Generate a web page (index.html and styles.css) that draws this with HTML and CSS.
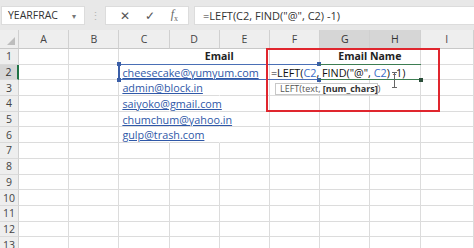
FILE: index.html
```html
<!DOCTYPE html>
<html lang="en">
<head>
  <meta charset="UTF-8">
  <title>Email Name</title>
  <link rel="stylesheet" href="styles.css">
</head>
<body>
  <div class="toolbar">
    <div class="name-box">
      <span>YEARFRAC</span>
      <span class="caret">▾</span>
    </div>
    <div class="grip">⋮</div>
    <div class="fx-box">
      <span class="cancel">✕</span>
      <span class="enter">✓</span>
      <span class="fx"><i>f</i><sub>x</sub></span>
    </div>
    <div class="formula-input">=LEFT(C2, FIND("@", C2) -1)</div>
  </div>

  <div class="sheet" id="sheet">
    <div class="ref-box">
      <span class="handle tl"></span><span class="handle bl"></span>
      <span class="handle tr"></span><span class="handle br"></span>
    </div>
    <div class="edit-box"><span class="handle br"></span></div>
    <div class="red-box"></div>
    <div class="tooltip">LEFT(text, <b>[num_chars]</b>)</div>
    <div class="ibeam"></div>
  </div>

  <script>
    const sheet = document.getElementById("sheet");
    const cols = ["A", "B", "C", "D", "E", "F", "G", "H", "I"];
    const emails = ["cheesecake@yumyum.com", "admin@block.in", "saiyoko@gmail.com", "chumchum@yahoo.in", "gulp@trash.com"];

    function cell(cls, html, span) {
      const div = document.createElement("div");
      div.className = cls;
      if (html) div.innerHTML = html;
      if (span) div.style.gridColumn = "span " + span;
      sheet.appendChild(div);
      return div;
    }

    cell("corner");
    cols.forEach((c) => cell(c === "G" || c === "H" ? "col-head sel" : "col-head", c));

    for (let r = 1; r <= 13; r++) {
      cell(r === 2 ? "row-head sel" : "row-head", r);
      if (r === 1) {
        cell("cell");
        cell("cell");
        cell("cell no-r");
        cell("cell head-text", "Email", 2);
        cell("cell");
        cell("cell head-text", "Email Name", 2);
        cell("cell");
        continue;
      }
      cols.forEach((c) => {
        let cls = "cell";
        let html = "";
        if (r <= 6 && (c === "C" || c === "D")) cls += " no-r";
        if (r === 2 && (c === "F" || c === "G")) cls += " no-r";
        if (r <= 6 && c === "C") html = '<span class="link">' + emails[r - 2] + "</span>";
        if (r === 2 && c === "F") html = '<span class="formula">=LEFT(<span class="ref">C2</span>, FIND("@", <span class="ref">C2</span>) -1)</span>';
        cell(cls, html);
      });
    }
  </script>
</body>
</html>
```

FILE: styles.css
```css
body {
  margin: 0;
  background-color: #fff;
  font-family: "Open Sans", "Noto Sans", sans-serif;
  color: #222;
  overflow: hidden;
}

/* formula bar */
.toolbar {
  height: 30px;
  background-color: #e8e8e8;
  display: flex;
  align-items: center;
  box-sizing: border-box;
  padding: 0 0 0 1px;
}

.name-box {
  width: 84px;
  height: 19px;
  background-color: #fff;
  border: 1px solid #dcdcdc;
  box-sizing: border-box;
  display: flex;
  align-items: center;
  justify-content: space-between;
  padding: 0 8px 0 6px;
  font-size: 10.5px;
  color: #333;
}

.caret {
  font-size: 8px;
  color: #777;
}

.grip {
  width: 20px;
  text-align: center;
  color: #b5b5b5;
  font-size: 11px;
}

.fx-box {
  width: 84px;
  height: 19px;
  background-color: #fff;
  border: 1px solid #dcdcdc;
  box-sizing: border-box;
  display: flex;
  align-items: center;
  justify-content: space-between;
  padding: 0 10px 0 14px;
  color: #555;
  font-size: 12px;
}

.fx {
  font-family: "Liberation Serif", serif;
  font-size: 12px;
  color: #666;
}

.fx sub {
  font-size: 8px;
}

.formula-input {
  flex: 1;
  height: 19px;
  margin-left: 5px;
  background-color: #fff;
  border: 1px solid #dcdcdc;
  border-right: none;
  box-sizing: border-box;
  padding: 0 0 0 8px;
  font-size: 11px;
  line-height: 17px;
  color: #333;
}

/* grid */
.sheet {
  position: relative;
  display: grid;
  grid-template-columns: 19px repeat(8, 50.2px) 1fr;
  grid-template-rows: 19px;
  grid-auto-rows: 15.7px;
}

.corner,
.col-head,
.row-head {
  background-color: #eeeeee;
  border-right: 1px solid #d0d0d0;
  border-bottom: 1px solid #c8c8c8;
  box-sizing: border-box;
  color: #444;
  font-size: 10.5px;
  display: flex;
  align-items: center;
  justify-content: center;
}

.corner {
  position: relative;
}

.corner::after {
  content: "";
  position: absolute;
  right: 3px;
  bottom: 3px;
  border-left: 8px solid transparent;
  border-bottom: 8px solid #bdbdbd;
}

.col-head.sel {
  background-color: #d6d6d6;
  color: #333;
}

.row-head {
  border-bottom-color: #dadada;
}

.row-head.sel {
  background-color: #d6d6d6;
  border-right: 2px solid #217346;
  color: #333;
}

.cell {
  border-right: 1px solid #dcdcdc;
  border-bottom: 1px solid #dcdcdc;
  box-sizing: border-box;
  font-size: 10.8px;
  white-space: nowrap;
  overflow: visible;
  display: flex;
  align-items: center;
  padding-left: 3px;
}

.cell.no-r {
  border-right-color: transparent;
}

.head-text {
  justify-content: center;
  font-weight: bold;
  font-size: 10.5px;
  padding-left: 0;
}

.link {
  color: #2f58a8;
  text-decoration: underline;
}

.formula {
  margin-left: -2px;
  color: #111;
}

.ref {
  color: #3a6cc8;
}

/* overlays */
.ref-box {
  position: absolute;
  left: 118px;
  top: 34px;
  width: 201px;
  height: 16px;
  border-top: 1px solid #4a6fb5;
  border-bottom: 1px solid #4a6fb5;
  border-left: 2px solid #3b5fa8;
  box-sizing: border-box;
}

.edit-box {
  position: absolute;
  left: 319px;
  top: 34px;
  width: 102px;
  height: 16px;
  border-top: 1px solid #3d7d52;
  border-bottom: 1px solid #3d7d52;
  box-sizing: border-box;
}

.handle {
  position: absolute;
  width: 4px;
  height: 4px;
  background-color: #3b5fa8;
}

.handle.tl { left: -3px; top: -3px; }
.handle.bl { left: -3px; bottom: -3px; }
.handle.tr { right: -2px; top: -3px; }
.handle.br { right: -2px; bottom: -3px; }

.edit-box .handle {
  background-color: #2b4e3a;
}

.red-box {
  position: absolute;
  left: 266px;
  top: 18px;
  width: 174px;
  height: 64px;
  border: 2px solid #e0262e;
  box-sizing: border-box;
}

.tooltip {
  position: absolute;
  left: 275px;
  top: 53px;
  width: 103px;
  height: 12px;
  background-color: #fff;
  border: 1px solid #c8c8c8;
  box-sizing: border-box;
  font-size: 9px;
  line-height: 10px;
  color: #555;
  padding-left: 4px;
  white-space: nowrap;
}

.tooltip b {
  color: #333;
}

.ibeam {
  position: absolute;
  left: 394px;
  top: 42px;
  width: 1px;
  height: 16px;
  background-color: #666;
}

.ibeam::before,
.ibeam::after {
  content: "";
  position: absolute;
  left: -2px;
  width: 5px;
  height: 1px;
  background-color: #666;
}

.ibeam::before { top: 0; }
.ibeam::after { bottom: 0; }
```
